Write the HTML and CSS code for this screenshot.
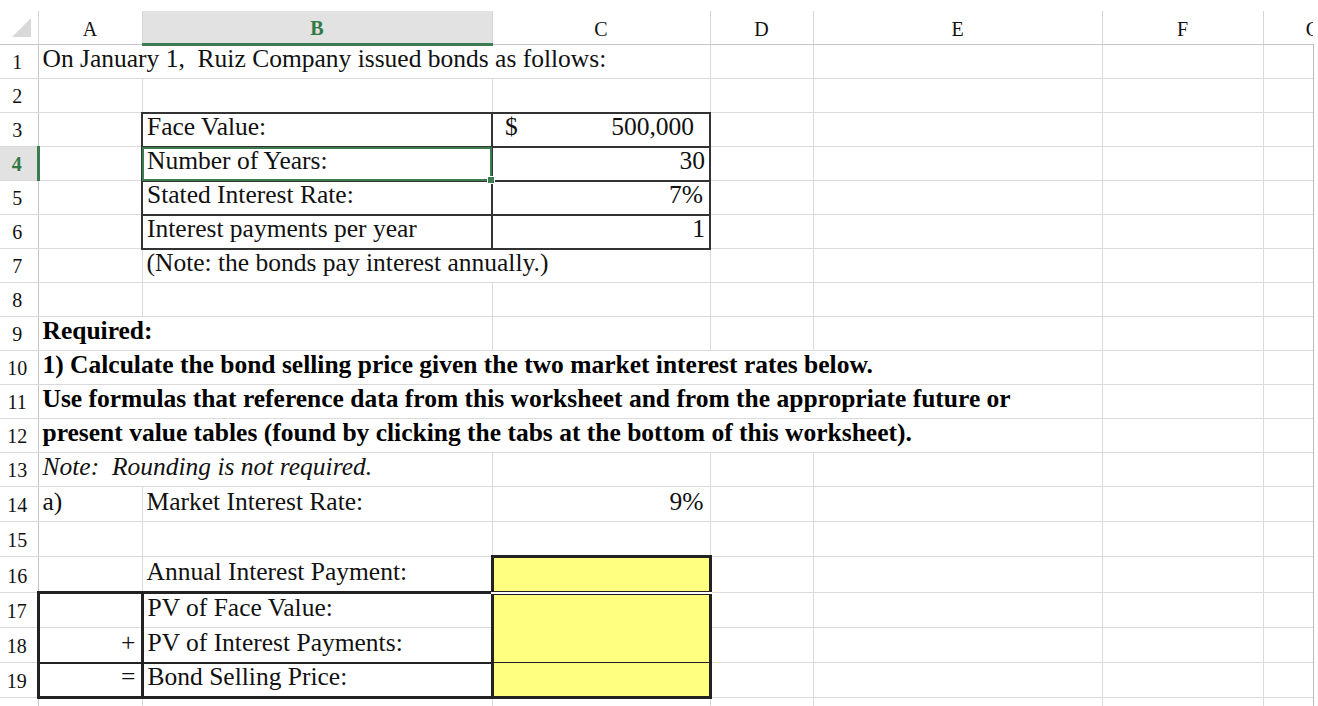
FILE: index.html
```html
<!DOCTYPE html>
<html lang="en">
<head>
    <meta charset="UTF-8">
    <meta name="viewport" content="width=device-width, initial-scale=1.0">
    <title>Bond Selling Price</title>
    <link rel="stylesheet" href="styles.css">
</head>
<body>
    <div class="window">
        <div class="viewport">
            <table class="sheet">
                <colgroup>
                    <col class="c-num"><col class="c-a"><col class="c-b"><col class="c-c">
                    <col class="c-d"><col class="c-e"><col class="c-f"><col class="c-g">
                </colgroup>
                <thead>
                    <tr class="heads">
                        <th class="corner">
                            <svg width="38" height="33" viewBox="0 0 38 33"><polygon points="12,26 31,7 31,26" fill="#d9d9d9"/></svg>
                        </th>
                        <th>A</th><th class="sel">B</th><th>C</th><th>D</th><th>E</th><th>F</th><th>G</th>
                    </tr>
                </thead>
                <tbody>
                    <tr>
                        <th class="num">1</th>
                        <td colspan="3">On January 1,&nbsp; Ruiz Company issued bonds as follows:</td>
                        <td></td><td></td><td></td><td></td>
                    </tr>
                    <tr>
                        <th class="num">2</th>
                        <td></td><td></td><td></td><td></td><td></td><td></td><td></td>
                    </tr>
                    <tr>
                        <th class="num">3</th>
                        <td></td>
                        <td class="ln">Face Value:</td>
                        <td class="ln"><div class="money"><span>$</span><span>500,000</span></div></td>
                        <td></td><td></td><td></td><td></td>
                    </tr>
                    <tr>
                        <th class="num cur">4</th>
                        <td></td>
                        <td class="ln active">Number of Years:</td>
                        <td class="ln val">30</td>
                        <td></td><td></td><td></td><td></td>
                    </tr>
                    <tr>
                        <th class="num">5</th>
                        <td></td>
                        <td class="ln">Stated Interest Rate:</td>
                        <td class="ln pct">7%</td>
                        <td></td><td></td><td></td><td></td>
                    </tr>
                    <tr>
                        <th class="num">6</th>
                        <td></td>
                        <td class="ln">Interest payments per year</td>
                        <td class="ln val">1</td>
                        <td></td><td></td><td></td><td></td>
                    </tr>
                    <tr>
                        <th class="num">7</th>
                        <td></td>
                        <td colspan="2">(Note: the bonds pay interest annually.)</td>
                        <td></td><td></td><td></td><td></td>
                    </tr>
                    <tr>
                        <th class="num">8</th>
                        <td></td><td></td><td></td><td></td><td></td><td></td><td></td>
                    </tr>
                    <tr>
                        <th class="num">9</th>
                        <td colspan="2" class="bold">Required:</td>
                        <td></td><td></td><td></td><td></td><td></td>
                    </tr>
                    <tr>
                        <th class="num">10</th>
                        <td colspan="5" class="bold">1) Calculate the bond selling price given the two market interest rates below.</td>
                        <td></td><td></td>
                    </tr>
                    <tr>
                        <th class="num">11</th>
                        <td colspan="5" class="bold">Use formulas that reference data from this worksheet and from the appropriate future or</td>
                        <td></td><td></td>
                    </tr>
                    <tr>
                        <th class="num">12</th>
                        <td colspan="5" class="bold">present value tables (found by clicking the tabs at the bottom of this worksheet).</td>
                        <td></td><td></td>
                    </tr>
                    <tr>
                        <th class="num">13</th>
                        <td colspan="2" class="note">Note:&nbsp; Rounding is not required.</td>
                        <td></td><td></td><td></td><td></td><td></td>
                    </tr>
                    <tr class="r-tall">
                        <th class="num">14</th>
                        <td>a)</td>
                        <td>Market Interest Rate:</td>
                        <td class="pct">9%</td>
                        <td></td><td></td><td></td><td></td>
                    </tr>
                    <tr class="r-tall">
                        <th class="num">15</th>
                        <td></td><td></td><td></td><td></td><td></td><td></td><td></td>
                    </tr>
                    <tr class="r-taller">
                        <th class="num">16</th>
                        <td></td>
                        <td>Annual Interest Payment:</td>
                        <td class="input in-top"></td>
                        <td></td><td></td><td></td><td></td>
                    </tr>
                    <tr class="r-tall">
                        <th class="num">17</th>
                        <td class="box box-top"></td>
                        <td class="box box-top">PV of Face Value:</td>
                        <td class="input in-mid"></td>
                        <td></td><td></td><td></td><td></td>
                    </tr>
                    <tr class="r-tall">
                        <th class="num">18</th>
                        <td class="box split sign">+</td>
                        <td class="box split">PV of Interest Payments:</td>
                        <td class="input in-split"></td>
                        <td></td><td></td><td></td><td></td>
                    </tr>
                    <tr class="r-tall">
                        <th class="num">19</th>
                        <td class="box box-bottom sign">=</td>
                        <td class="box box-bottom">Bond Selling Price:</td>
                        <td class="input in-bottom"></td>
                        <td></td><td></td><td></td><td></td>
                    </tr>
                    <!-- row 20 sits below the fold, only its top gridline shows -->
                    <tr class="r-tall">
                        <th class="num"></th>
                        <td></td><td></td><td></td><td></td><td></td><td></td><td></td>
                    </tr>
                </tbody>
            </table>
        </div>
        <div class="edge"></div>
    </div>
</body>
</html>
```

FILE: styles.css
```css
html, body {
    margin: 0;
    padding: 0;
    height: 706px;
    overflow: hidden;
    background-color: #fff;
}
body {
    font-family: "Liberation Serif", "Times New Roman", serif;
    color: #111;
}
.window {
    display: flex;
    padding-top: 11px;
}
.viewport {
    flex: none;
    width: 1313px;
    overflow: hidden;
}
.edge {
    flex: none;
    width: 1px;
    margin-top: 33px;
    background-color: #bcbcbc;
}
.sheet {
    border-collapse: collapse;
    table-layout: fixed;
    width: 1363px;
}
.c-num { width: 38px; }
.c-a { width: 104px; }
.c-b { width: 350px; }
.c-c { width: 218px; }
.c-d { width: 103px; }
.c-e { width: 289px; }
.c-f { width: 161px; }
.c-g { width: 100px; }

/* column + row headers */
tr.heads { height: 33px; }
.heads th {
    padding: 0 0 5px;
    font-size: 20px;
    font-weight: normal;
    line-height: 20px;
    vertical-align: bottom;
    text-align: center;
    border-right: 1px solid #d6d6d6;
    border-bottom: 1px solid #c6c6c6;
}
.heads th.corner {
    padding: 0;
    vertical-align: top;
}
.corner svg {
    display: block;
}
.heads th.sel {
    background-color: #e2e2e2;
    color: #2f7a47;
    font-weight: bold;
    border-bottom: 3px solid #3b7d50;
}
.num {
    padding: 0 3px 6px 0;
    font-size: 20px;
    font-weight: normal;
    line-height: 20px;
    vertical-align: bottom;
    text-align: center;
    border-right: 1px solid #c6c6c6;
    border-bottom: 1px solid #dadada;
}
.num.cur {
    background-color: #e2e2e2;
    color: #2f7a47;
    font-weight: bold;
    border-right: 3px solid #3b7d50;
}

/* cells */
tr { height: 34px; }
tr.r-tall { height: 35px; }
tr.r-taller { height: 36px; }
td {
    padding: 0 4px 7px;
    font-size: 25.5px;
    line-height: 25px;
    vertical-align: bottom;
    white-space: nowrap;
    overflow: hidden;
    border: 1px solid #dadada;
}
.bold {
    font-weight: bold;
    color: #000;
}
.note {
    font-style: italic;
}
.val {
    text-align: right;
}
.pct {
    text-align: right;
    padding-right: 6px;
}
.money {
    display: flex;
    justify-content: space-between;
    padding: 0 11px 0 8px;
}
.ln {
    border: 2px solid #333;
}
td.active {
    position: relative;
    overflow: visible;
    outline: 2px solid #3b7d50;
    outline-offset: -2px;
}
td.active::after {
    content: "";
    position: absolute;
    right: -4px;
    bottom: -4px;
    width: 6px;
    height: 6px;
    background-color: #3b7d50;
    border: 1px solid #fff;
}

/* answer block */
.box {
    border-left: 3px solid #222;
    border-right: 3px solid #222;
}
.box-top { border-top: 3px solid #222; }
.box-bottom { border-bottom: 3px solid #222; }
.split { border-bottom: 2px solid #222; }
.sign {
    text-align: right;
    padding-right: 5px;
}
.input {
    background-color: #ffff80;
    border-left: 3px solid #222;
    border-right: 3px solid #222;
}
.in-top {
    border-top: 3px solid #222;
    border-bottom: 4px double #222;
}
.in-mid { border-bottom-color: #ffff80; }
.in-split { border-bottom: 1px solid #222; }
.in-bottom { border-bottom: 3px solid #222; }
```
